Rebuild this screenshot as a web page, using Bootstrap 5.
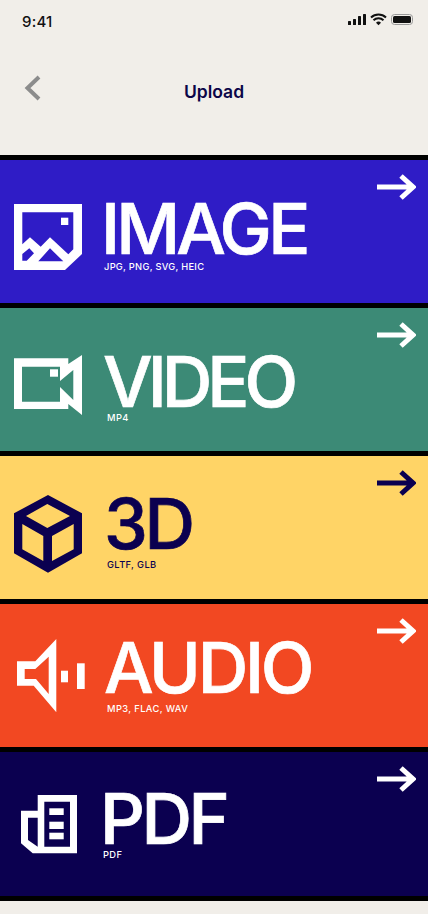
<!doctype html>
<html lang="en"><head><meta charset="utf-8">
<meta name="viewport" content="width=device-width, initial-scale=1">
<link href="https://cdn.jsdelivr.net/npm/bootstrap@5.3.0/dist/css/bootstrap.min.css" rel="stylesheet">
<style>
body{background:#f1eee9;font-family:Inter,"Liberation Sans",sans-serif;width:428px;height:914px;overflow:hidden}
.stat{height:70px;padding:13px 14px 0 22px;color:#111}
.stat-time{font-size:15px;font-weight:500;line-height:18px;letter-spacing:.2px}
.head-bar{height:70px;padding-left:24px;padding-right:24px}
.head-title{font-size:17.500px;font-weight:600;color:#0b0548;line-height:22px;flex:1;text-align:center;padding-right:17px;margin-top:-26px}
.head-bar svg{margin-top:-34px}
.tiles{border-top:5px solid #000;margin-top:15px}
.tile{height:143px;border-bottom:5px solid #000;box-sizing:content-box;color:#fff}
.t1{background:#2f1cc6}.t2{background:#3c8a76}.t3{background:#ffd466;color:#0b0050}.t4{background:#f24822}.t5{background:#0b0050;height:144px}
.tile-arrow{margin:14px 12px 0 0;flex:none}
.tile-ico{flex:none}
.tile-name{font-size:70px;font-weight:500;-webkit-text-stroke:.7px currentColor;line-height:51px;margin-left:-3px}
.tile-sub{font-size:9.300px;font-weight:500;line-height:11px;letter-spacing:.4px}
.t1 .tile-main{padding:44px 0 0 14px}.t1 .tile-ico{margin-right:22px}
.t1 .tile-name{margin-top:-1px;letter-spacing:-3.800px}.t1 .tile-sub{margin-top:7px;letter-spacing:.28px}
.t2 .tile-main{padding:47px 0 0 14px}.t2 .tile-ico{margin-right:25px}
.t2 .tile-name{margin-top:1px;letter-spacing:-5px;margin-left:-4px}.t2 .tile-sub{margin-top:5px}
.t3 .tile-main{padding:39px 0 0 14px}.t3 .tile-ico{margin-right:25px}
.t3 .tile-name{margin-top:3px;letter-spacing:-3.500px}.t3 .tile-sub{margin-top:10px}
.t4 .tile-main{padding:35px 0 0 17px}.t4 .tile-ico{margin-right:22px}
.t4 .tile-name{margin-top:3px;letter-spacing:-3.200px}.t4 .tile-sub{margin-top:10px}
.t5 .tile-main{padding:43px 0 0 21px}.t5 .tile-ico{margin-right:26px}
.t5 .tile-name{margin-top:-2px;letter-spacing:-3.500px}.t5 .tile-sub{margin-top:5px}
</style></head><body>
<div class="stat d-flex justify-content-between align-items-start">
<span class="stat-time">9:41</span>
<svg width="66" height="13" viewBox="0 0 66 13"><g fill="#111"><rect x="0" y="8" width="3" height="4" rx=".6"/><rect x="5" y="6" width="3" height="6" rx=".6"/><rect x="10" y="3" width="3" height="9" rx=".6"/><rect x="15" y="1" width="3" height="11" rx=".6"/></g><path d="M23 4.500a11 11 0 0 1 15 0M25.500 7.300a7 7 0 0 1 10 0" fill="none" stroke="#111" stroke-width="2"/><path d="M28 9.700a3.400 3.400 0 0 1 5 0L30.500 12.200Z" fill="#111"/><rect x="43.500" y="1.500" width="21" height="10" rx="3" fill="none" stroke="#999"/><rect x="45" y="3" width="18" height="7" rx="1.500" fill="#111"/></svg>
</div>
<div class="head-bar d-flex align-items-center">
<svg width="17" height="26" viewBox="0 0 17 26"><path d="M15 2 3.500 13 15 24" fill="none" stroke="#8c8c8c" stroke-width="4"/></svg>
<div class="head-title">Upload</div>
</div>
<div class="tiles d-flex flex-column">
<div class="tile t1 d-flex justify-content-between"><div class="tile-main d-flex align-items-start">
<svg class="tile-ico" width="68" height="66" viewBox="0 0 68 66"><path fill="#fff" fill-rule="evenodd" d="M0 0H68V50L51 66H0ZM8.300 8.300V40.300L16 33.300 26.700 42.700 36 33.300 54.300 50.300 59.300 45.300V8.300ZM8.300 50V56.700H12.700L20 49.300 15.300 44.300ZM24.300 57.300H49.300L36 44.300Z"/><rect x="47" y="13.700" width="7.300" height="7.300" fill="#fff"/></svg>
<div><div class="tile-name">IMAGE</div><div class="tile-sub">JPG, PNG, SVG, HEIC</div></div></div>
<svg class="tile-arrow" width="39" height="26" viewBox="0 0 39 26"><path d="M0 13H36M24 2 36 13 24 24" fill="none" stroke="#fff" stroke-width="5"/></svg></div>
<div class="tile t2 d-flex justify-content-between"><div class="tile-main d-flex align-items-start">
<svg class="tile-ico" width="68" height="60" viewBox="0 0 68 60"><path fill="#fff" fill-rule="evenodd" d="M0 3.300H54.300V9L68 0V60L54.300 49V54H0ZM8 11.700V46.700H46V32L59.300 45V15L46 26V11.700Z"/><rect x="36" y="14.300" width="8" height="7.400" fill="#fff"/></svg>
<div><div class="tile-name">VIDEO</div><div class="tile-sub">MP4</div></div></div>
<svg class="tile-arrow" width="39" height="26" viewBox="0 0 39 26"><path d="M0 13H36M24 2 36 13 24 24" fill="none" stroke="#fff" stroke-width="5"/></svg></div>
<div class="tile t3 d-flex justify-content-between"><div class="tile-main d-flex align-items-start">
<svg class="tile-ico" width="68" height="78" viewBox="0 0 68 78"><path fill="#0b0050" fill-rule="evenodd" d="M34 0 68 18.300V58.300L34 77.700 0 58.300V18.300ZM12 21 33.300 9 56 21 33.300 33ZM8.300 29 29.300 41V66L8.300 54.300ZM38 41 59.700 29V54.300L38 66Z"/></svg>
<div><div class="tile-name">3D</div><div class="tile-sub">GLTF, GLB</div></div></div>
<svg class="tile-arrow" width="39" height="26" viewBox="0 0 39 26"><path d="M0 13H36M24 2 36 13 24 24" fill="none" stroke="#0b0050" stroke-width="5"/></svg></div>
<div class="tile t4 d-flex justify-content-between"><div class="tile-main d-flex align-items-start">
<svg class="tile-ico" width="68" height="74" viewBox="0 0 68 74"><path fill="#fff" fill-rule="evenodd" d="M0 22.300H18.300L39.300 0V73.300L16.700 46.700H0ZM7.700 30V40H19L31.700 55V17.700L18.300 30Z"/><rect x="44" y="31.700" width="7" height="11.600" fill="#fff"/><rect x="60" y="24.300" width="7.700" height="25.700" fill="#fff"/></svg>
<div><div class="tile-name">AUDIO</div><div class="tile-sub">MP3, FLAC, WAV</div></div></div>
<svg class="tile-arrow" width="39" height="26" viewBox="0 0 39 26"><path d="M0 13H36M24 2 36 13 24 24" fill="none" stroke="#fff" stroke-width="5"/></svg></div>
<div class="tile t5 d-flex justify-content-between"><div class="tile-main d-flex align-items-start">
<svg class="tile-ico" width="56" height="59" viewBox="0 0 56 59"><path fill="#fff" fill-rule="evenodd" d="M16.700 0H56V58.300H11.700L0 48.300V15.700H16.700ZM23.300 6.700V51.700H49V6.700ZM7 22.700V45L16.700 51.700V22.700Z"/><rect x="28.300" y="13.300" width="14.400" height="6.700" fill="#fff"/><rect x="28.300" y="26.700" width="14.400" height="7.300" fill="#fff"/><rect x="28.300" y="37.700" width="14.400" height="6.600" fill="#fff"/></svg>
<div><div class="tile-name">PDF</div><div class="tile-sub">PDF</div></div></div>
<svg class="tile-arrow" width="39" height="26" viewBox="0 0 39 26"><path d="M0 13H36M24 2 36 13 24 24" fill="none" stroke="#fff" stroke-width="5"/></svg></div>
</div>
<script src="https://cdn.jsdelivr.net/npm/bootstrap@5.3.0/dist/js/bootstrap.bundle.min.js"></script>
</body></html>
